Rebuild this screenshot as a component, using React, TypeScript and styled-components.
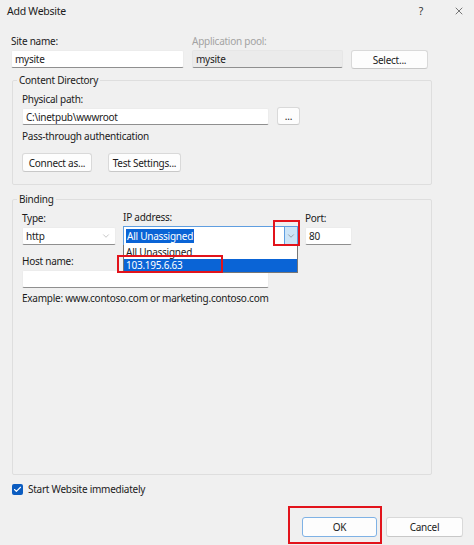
import styled, { createGlobalStyle } from "styled-components";
import { Check, ChevronDown, X } from "lucide-react";

const GlobalStyle = createGlobalStyle`
  html, body {
    margin: 0;
    padding: 0;
    background: #f0f0f0;
  }
  * { box-sizing: border-box; }
`;

const Window = styled.div`
  width: 474px;
  height: 545px;
  background: #f0f0f0;
  font-family: "Noto Sans", "Open Sans", sans-serif;
  font-size: 10px;
  letter-spacing: -0.25px;
  color: #1b1b1b;
  overflow: hidden;
`;

const TitleBar = styled.div`
  height: 22px;
  display: flex;
  align-items: center;
  justify-content: space-between;
  padding: 0 9px 0 7px;
  font-size: 10.5px;
`;

const TitleIcons = styled.div`
  display: flex;
  align-items: center;
  gap: 30px;
  color: #333;
`;

const Body = styled.div`
  padding: 0 11px 0 11px;
`;

const TopRow = styled.div`
  display: flex;
  align-items: flex-end;
  gap: 8px;
  margin-top: 12px;
`;

const Field = styled.div<{ $w: number }>`
  width: ${(p) => p.$w}px;
  display: flex;
  flex-direction: column;
  gap: 2px;
`;

const Label = styled.div<{ $muted?: boolean }>`
  line-height: 14px;
  height: 14px;
  color: ${(p) => (p.$muted ? "#a3a3a3" : "#1b1b1b")};
  white-space: nowrap;
`;

const TextBox = styled.div<{ $muted?: boolean; $h?: number }>`
  height: ${(p) => p.$h ?? 18}px;
  background: ${(p) => (p.$muted ? "#ebebeb" : "#ffffff")};
  border: 1px solid ${(p) => (p.$muted ? "#e6e6e6" : "#ececec")};
  border-bottom: 1px solid #8f8f8f;
  border-radius: 2px;
  padding: 0 3px;
  display: flex;
  align-items: center;
  white-space: nowrap;
`;

const Button = styled.div<{ $w: number; $h?: number; $focus?: boolean }>`
  width: ${(p) => p.$w}px;
  height: ${(p) => p.$h ?? 19}px;
  background: #fdfdfd;
  border: 1px solid ${(p) => (p.$focus ? "#7fb2e5" : "#d9d9d9")};
  border-bottom-color: ${(p) => (p.$focus ? "#7fb2e5" : "#c8c8c8")};
  border-radius: 3px;
  display: flex;
  align-items: center;
  justify-content: center;
  white-space: nowrap;
  flex-shrink: 0;
`;

const Group = styled.fieldset<{ $h?: number; $mt: number; $pt: number }>`
  margin: ${(p) => p.$mt}px 0 0 1px;
  width: 420px;
  ${(p) => (p.$h ? `height: ${p.$h}px;` : "")}
  border: 1px solid #dedede;
  border-radius: 2px;
  padding: ${(p) => p.$pt}px 9px 12px 9px;
`;

const Legend = styled.legend`
  padding: 0 2px;
  margin-left: -5px;
  line-height: 12px;
`;

const Row = styled.div<{ $gap?: number; $mt?: number }>`
  display: flex;
  align-items: flex-end;
  gap: ${(p) => p.$gap ?? 8}px;
  margin-top: ${(p) => p.$mt ?? 0}px;
`;

const Combo = styled.div<{ $w: number }>`
  width: ${(p) => p.$w}px;
  height: 18px;
  background: #fff;
  border: 1px solid #ececec;
  border-bottom: 1px solid #8f8f8f;
  border-radius: 2px;
  display: flex;
  align-items: center;
  justify-content: space-between;
  padding: 0 4px 0 3px;
`;

const FocusedCombo = styled.div`
  width: 175px;
  height: 20px;
  margin-bottom: -1px;
  background: #fff;
  border: 1px solid #5f9ee0;
  display: flex;
  align-items: stretch;
  justify-content: space-between;
`;

const SelectedText = styled.span`
  margin: 2px 0 2px 2px;
  padding: 0 1px;
  background: #0a64d6;
  color: #fff;
  display: flex;
  align-items: center;
`;

const DropButton = styled.span`
  width: 13px;
  background: #cce4f7;
  border-left: 1px solid #5f9ee0;
  display: flex;
  align-items: center;
  justify-content: center;
  color: #6a6a6a;
`;

const DropList = styled.div`
  position: absolute;
  left: 0;
  top: 19px;
  width: 175px;
  height: 28px;
  background: #fff;
  border: 1px solid #767676;
  border-top: none;
  z-index: 2;
`;

const ListItem = styled.div<{ $active?: boolean; $h: number }>`
  height: ${(p) => p.$h}px;
  line-height: ${(p) => p.$h}px;
  padding-left: 2px;
  overflow: hidden;
  background: ${(p) => (p.$active ? "#0a64d6" : "#fff")};
  color: ${(p) => (p.$active ? "#fff" : "#1b1b1b")};
`;

const Callout = styled.span<{ $t: number; $l: number; $w: number; $h: number }>`
  position: absolute;
  top: ${(p) => p.$t}px;
  left: ${(p) => p.$l}px;
  width: ${(p) => p.$w}px;
  height: ${(p) => p.$h}px;
  border: 2px solid #e2131b;
  pointer-events: none;
  z-index: 3;
`;

const Note = styled.div`
  margin-top: 3px;
  line-height: 14px;
`;

const CheckRow = styled.div`
  display: flex;
  align-items: center;
  gap: 5px;
  margin: 7px 0 0 1px;
  line-height: 14px;
`;

const CheckBox = styled.span`
  width: 11px;
  height: 11px;
  border-radius: 2px;
  background: #0b5cc0;
  display: flex;
  align-items: center;
  justify-content: center;
  color: #fff;
`;

const Footer = styled.div`
  display: flex;
  justify-content: flex-end;
  gap: 9px;
  margin-top: 21px;
`;

const Anchor = styled.div`
  position: relative;
`;

export default function App() {
  return (
    <Window>
      <GlobalStyle />
      <TitleBar>
        <span>Add Website</span>
        <TitleIcons>
          <span>?</span>
          <X size={12} strokeWidth={1.3} />
        </TitleIcons>
      </TitleBar>
      <Body>
        <TopRow>
          <Field $w={173}>
            <Label>Site name:</Label>
            <TextBox>mysite</TextBox>
          </Field>
          <Field $w={151}>
            <Label $muted>Application pool:</Label>
            <TextBox $muted>mysite</TextBox>
          </Field>
          <Button $w={77} style={{ marginBottom: -1 }}>
            Select...
          </Button>
        </TopRow>

        <Group $mt={6} $pt={6}>
          <Legend>Content Directory</Legend>
          <Label>Physical path:</Label>
          <Row $mt={1}>
            <Field $w={247}>
              <TextBox $h={17}>C:\inetpub\wwwroot</TextBox>
            </Field>
            <Button $w={23} $h={18}>
              ...
            </Button>
          </Row>
          <Label style={{ marginTop: 4 }}>Pass-through authentication</Label>
          <Row $gap={16} $mt={10}>
            <Button $w={70}>Connect as...</Button>
            <Button $w={73}>Test Settings...</Button>
          </Row>
        </Group>

        <Group $mt={8} $pt={5} $h={282}>
          <Legend>Binding</Legend>
          <Row $gap={7}>
            <Field $w={94}>
              <Label>Type:</Label>
              <Combo $w={94}>
                <span>http</span>
                <ChevronDown size={10} color="#a0a0a0" strokeWidth={1.4} />
              </Combo>
            </Field>
            <Field $w={175}>
              <Label>IP address:</Label>
              <Anchor>
                <FocusedCombo>
                  <SelectedText>All Unassigned</SelectedText>
                  <DropButton>
                    <ChevronDown size={10} strokeWidth={1.4} />
                  </DropButton>
                </FocusedCombo>
                <Callout $t={-6} $l={150} $w={27} $h={26} />
                <DropList>
                  <ListItem $h={14}>All Unassigned</ListItem>
                  <ListItem $h={13} $active>
                    103.195.6.63
                  </ListItem>
                  <Callout $t={10} $l={-7} $w={106} $h={18} />
                </DropList>
              </Anchor>
            </Field>
            <Field $w={47}>
              <Label>Port:</Label>
              <TextBox>80</TextBox>
            </Field>
          </Row>
          <Label style={{ marginTop: 9 }}>Host name:</Label>
          <Field $w={247} style={{ marginTop: 2 }}>
            <TextBox />
          </Field>
          <Note>Example: www.contoso.com or marketing.contoso.com</Note>
        </Group>

        <CheckRow>
          <CheckBox>
            <Check size={9} strokeWidth={3} />
          </CheckBox>
          <span>Start Website immediately</span>
        </CheckRow>

        <Footer>
          <Anchor>
            <Button $w={75} $h={20} $focus>
              OK
            </Button>
            <Callout $t={-11} $l={-14} $w={94} $h={38} />
          </Anchor>
          <Button $w={77} $h={20}>
            Cancel
          </Button>
        </Footer>
      </Body>
    </Window>
  );
}
